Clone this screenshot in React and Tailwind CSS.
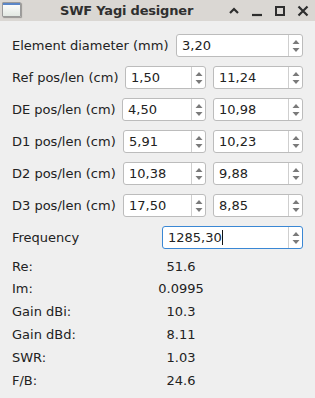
import React from 'react'

const Arrows = () => (
    <div className="w-[14px] border-l border-[#cfcfcf] flex items-center justify-center">
        <svg width="8" height="14" viewBox="0 0 8 14">
            <polygon points="4,1 7.5,5 0.5,5" fill="#7a7a7a" />
            <polygon points="0.5,9 7.5,9 4,13" fill="#7a7a7a" />
        </svg>
    </div>
)

const Spin = ({ value, focused, className }) => (
    <div className={`flex h-[23px] bg-white rounded-[3px] border ${focused ? 'border-[#3a87d4]' : 'border-[#bcbcbc]'} ${className}`}>
        <div className="flex-1 flex items-center pl-[5px] overflow-hidden whitespace-nowrap">
            {value}
            {focused && <span className="inline-block w-px h-[15px] bg-[#111]" />}
        </div>
        <Arrows />
    </div>
)

const rows = [
    { label: "Ref pos/len (cm)", w: "w-[113px]", a: "1,50", b: "11,24" },
    { label: "DE pos/len (cm)", w: "w-[110px]", a: "4,50", b: "10,98" },
    { label: "D1 pos/len (cm)", w: "w-[111px]", a: "5,91", b: "10,23" },
    { label: "D2 pos/len (cm)", w: "w-[111px]", a: "10,38", b: "9,88" },
    { label: "D3 pos/len (cm)", w: "w-[111px]", a: "17,50", b: "8,85" },
]

const results = [
    ["Re:", "51.6"],
    ["Im:", "0.0995"],
    ["Gain dBi:", "10.3"],
    ["Gain dBd:", "8.11"],
    ["SWR:", "1.03"],
    ["F/B:", "24.6"],
]

const App = () => {
    return (
        <div className="w-[315px] h-[398px] bg-[#efefef] text-[13px] text-[#222] overflow-hidden" style={{ fontFamily: '"DejaVu Sans", sans-serif' }}>
            {/* title bar */}
            <div className="h-[21px] bg-[#dad7d3] flex items-center relative">
                <div className="ml-[2px] mt-[-3px] w-[19px] h-[15px] border border-[#9a9a9a] rounded-[1px] bg-gradient-to-b from-[#ffffff] to-[#e2e8e2] shadow-[1px_1px_1px_rgba(0,0,0,0.3)] overflow-hidden">
                    <div className="h-[2px] bg-[#5a86c8]" />
                </div>
                <div className="ml-[39px] font-bold text-[#2f2f2f] text-[13px] tracking-[-0.2px]">SWF Yagi designer</div>
                <div className="ml-auto flex items-center mr-[6px] gap-[11px]">
                    <svg width="12" height="12" viewBox="0 0 12 12"><polyline points="2,8 6,4 10,8" fill="none" stroke="#2e2e2e" strokeWidth="2.2" /></svg>
                    <svg width="12" height="12" viewBox="0 0 12 12"><line x1="1" y1="10" x2="11" y2="10" stroke="#2e2e2e" strokeWidth="2.2" /></svg>
                    <svg width="12" height="12" viewBox="0 0 12 12"><rect x="2" y="2" width="8" height="8" fill="none" stroke="#2e2e2e" strokeWidth="2" /></svg>
                    <svg width="12" height="12" viewBox="0 0 12 12"><path d="M1.5 1.5 L10.5 10.5 M10.5 1.5 L1.5 10.5" stroke="#2e2e2e" strokeWidth="2.2" /></svg>
                </div>
            </div>

            <div className="pl-[12px] pr-[12px] pt-[13px] flex flex-col gap-[9px]">
                <div className="flex items-center">
                    <span className="whitespace-nowrap">Element diameter (mm)</span>
                    <Spin value="3,20" className="ml-auto w-[127px]" />
                </div>
                {rows.map((r) => (
                    <div key={r.label} className="flex items-center">
                        <span className={`${r.w} shrink-0 whitespace-nowrap`}>{r.label}</span>
                        <Spin value={r.a} className="flex-1" />
                        <Spin value={r.b} className="ml-[7px] w-[90px]" />
                    </div>
                ))}
                <div className="flex items-center">
                    <span className="w-[150px] shrink-0">Frequency</span>
                    <Spin value="1285,30" focused className="flex-1" />
                </div>
            </div>

            <div className="pl-[12px] mt-[6px] flex flex-col">
                {results.map(([k, v]) => (
                    <div key={k} className="flex h-[22.8px] items-center">
                        <span className="w-[128px]">{k}</span>
                        <span className="w-[82px] text-center">{v}</span>
                    </div>
                ))}
            </div>
        </div>
    )
}

export default App
